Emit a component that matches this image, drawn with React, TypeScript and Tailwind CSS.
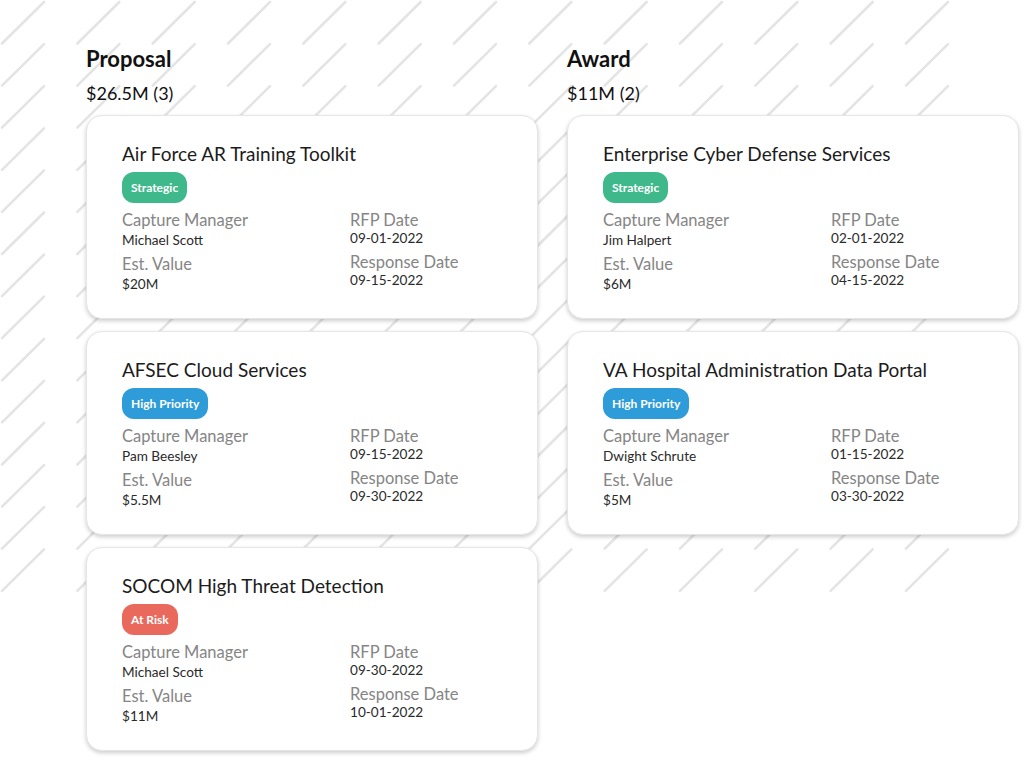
import React from "react";

type Deal = {
  title: string;
  tag: "Strategic" | "High Priority" | "At Risk";
  manager: string;
  value: string;
  rfp: string;
  response: string;
};

const proposal: Deal[] = [
  { title: "Air Force AR Training Toolkit", tag: "Strategic", manager: "Michael Scott", value: "$20M", rfp: "09-01-2022", response: "09-15-2022" },
  { title: "AFSEC Cloud Services", tag: "High Priority", manager: "Pam Beesley", value: "$5.5M", rfp: "09-15-2022", response: "09-30-2022" },
  { title: "SOCOM High Threat Detection", tag: "At Risk", manager: "Michael Scott", value: "$11M", rfp: "09-30-2022", response: "10-01-2022" },
];

const award: Deal[] = [
  { title: "Enterprise Cyber Defense Services", tag: "Strategic", manager: "Jim Halpert", value: "$6M", rfp: "02-01-2022", response: "04-15-2022" },
  { title: "VA Hospital Administration Data Portal", tag: "High Priority", manager: "Dwight Schrute", value: "$5M", rfp: "01-15-2022", response: "03-30-2022" },
];

function Tag({ tag }: { tag: Deal["tag"] }) {
  const cls =
    tag === "Strategic"
      ? "bg-[#3fb98b]"
      : tag === "High Priority"
      ? "bg-[#2d9cd9]"
      : "bg-[#e96a5c]";
  return (
    <span
      className={`${cls} inline-flex h-[31px] items-center rounded-[12px] px-[9px] text-[12px] font-bold text-white`}
    >
      {tag}
    </span>
  );
}

function Card({ d }: { d: Deal }) {
  return (
    <div className="h-[204px] w-[452px] rounded-[16px] border border-[#e6e6e6] bg-white pl-[35px] pt-[26px] shadow-[0_2px_4px_rgba(0,0,0,0.2)]">
      <div className="text-[19px] leading-[24px] text-[#1c1c1c]">{d.title}</div>
      <div className="mt-[6px] flex">
        <Tag tag={d.tag} />
      </div>
      <div className="mt-[7px] flex">
        <div className="w-[228px]">
          <div className="text-[16.5px] leading-[20px] text-[#858585]">Capture Manager</div>
          <div className="text-[13.6px] leading-[20px] text-[#2a2a2a]">{d.manager}</div>
          <div className="mt-[4px] text-[16.5px] leading-[20px] text-[#858585]">Est. Value</div>
          <div className="text-[13.6px] leading-[20px] text-[#2a2a2a]">{d.value}</div>
        </div>
        <div>
          <div className="text-[16.5px] leading-[20px] text-[#858585]">RFP Date</div>
          <div className="text-[13.6px] leading-[16px] text-[#2a2a2a]">{d.rfp}</div>
          <div className="mt-[6px] text-[16.5px] leading-[20px] text-[#858585]">Response Date</div>
          <div className="text-[13.6px] leading-[16px] text-[#2a2a2a]">{d.response}</div>
        </div>
      </div>
    </div>
  );
}

function Column({ name, total, deals }: { name: string; total: string; deals: Deal[] }) {
  return (
    <div className="flex w-[452px] flex-col">
      <div className="text-[22px] font-bold leading-[28px] text-[#111]">{name}</div>
      <div className="mt-[8px] text-[18px] leading-[24px] text-[#111]">{total}</div>
      <div className="mt-[10px] flex flex-col gap-[12px]">
        {deals.map((d) => (
          <Card key={d.title} d={d} />
        ))}
      </div>
    </div>
  );
}

function Pattern() {
  const lines: React.ReactElement[] = [];
  for (let r = 0; r < 14; r++) {
    for (let c = 0; c < 13; c++) {
      const x = 2 + c * 75.33;
      const y = 2 + r * 42.1;
      lines.push(
        <line
          key={`${r}-${c}`}
          x1={x}
          y1={y + 41.5}
          x2={x + 42}
          y2={y}
          stroke="#e4e4e4"
          strokeWidth={2.6}
          strokeLinecap="round"
        />
      );
    }
  }
  return (
    <svg className="pointer-events-none absolute left-0 top-0" width={960} height={600}>
      {lines}
    </svg>
  );
}

export default function App() {
  return (
    <div
      className="relative min-h-[762px] w-full overflow-hidden bg-white"
      style={{ fontFamily: "Lato, 'Open Sans', sans-serif" }}
    >
      <Pattern />
      <div className="relative flex gap-[29px] pl-[86px] pt-[45px]">
        <Column name="Proposal" total="$26.5M (3)" deals={proposal} />
        <Column name="Award" total="$11M (2)" deals={award} />
      </div>
    </div>
  );
}
